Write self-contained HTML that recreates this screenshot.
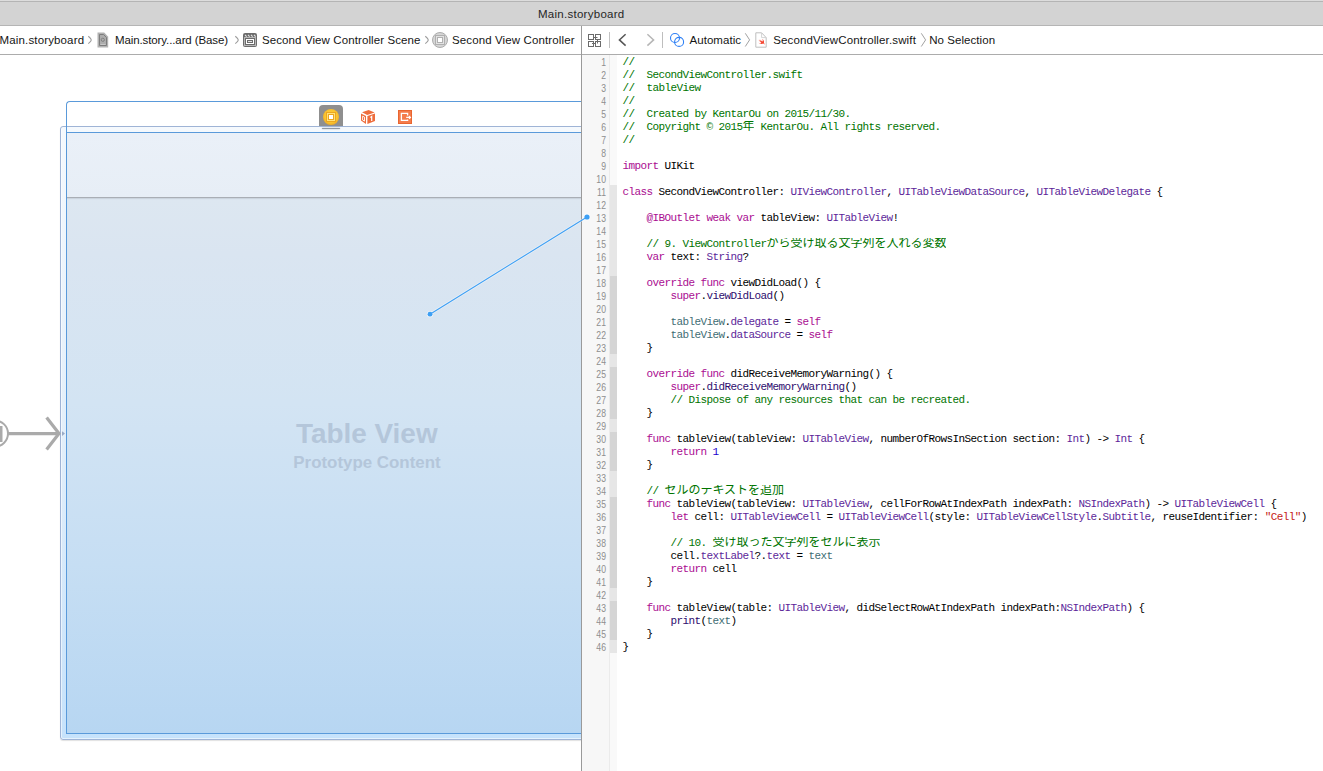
<!DOCTYPE html>
<html lang="en">
<head>
<meta charset="utf-8">
<title>Main.storyboard</title>
<style>
html,body{margin:0;padding:0}
body{width:1323px;height:771px;overflow:hidden;position:relative;background:#fff;font-family:"Liberation Sans",sans-serif;color:#000}
div,span,svg{position:absolute}
/* ---------- title bar ---------- */
#titlebar{left:0;top:0;width:1323px;height:26px;background:#d3d3d3;border-top:1px solid #dcdcdc;box-sizing:border-box;border-bottom:1px solid #b5b5b5}
#titlebar:before{content:"";position:absolute;left:0;top:0;width:100%;height:1px;background:#b4b4b4}
#title{left:538px;top:6px;width:88px;height:14px;line-height:14px;font-size:11.5px;color:#262626;white-space:nowrap;letter-spacing:.27px}
/* ---------- jump bars ---------- */
#jump{left:0;top:26px;width:1323px;height:28px;background:#fff;border-bottom:1px solid #acacac}
.bc{top:7px;height:14px;line-height:14px;font-size:11.5px;color:#151515;white-space:nowrap}
#vdiv{left:581px;top:26px;width:1px;height:745px;background:#9a9a9a}
/* ---------- storyboard canvas ---------- */
#canvas{left:0;top:55px;width:581px;height:716px;background:#fff;overflow:hidden}

/* storyboard objects */
#frame{left:60px;top:71px;width:600px;height:614px;box-sizing:border-box;border:1px solid #9fb4d6;border-radius:3px;background:linear-gradient(#f5f9fd 0%,#e3effa 50%,#c6e2fb 100%);box-shadow:0 1px 1px rgba(0,0,0,.12),inset 1px 0 0 rgba(255,255,255,.55),inset 0 -1px 0 rgba(255,255,255,.55)}
#dock{left:66px;top:46px;width:600px;height:25px;box-sizing:border-box;border-left:1px solid #5a9ada;border-top:1px solid #5a9ada;border-radius:4px 0 0 0;background:#fff}
#dockl{left:66px;top:71px;width:1px;height:7px;background:#5a9ada}
#view{left:66px;top:77px;width:600px;height:602px;box-sizing:border-box;border:1px solid #5a9ada;background:linear-gradient(#e0e8f1 0%,#dde7f1 11%,#dae5f1 20%,#d3e4f3 45%,#c6def3 72%,#b7d6f2 100%)}
#nav{left:0;top:0;width:598px;height:64px;background:linear-gradient(#eaf0f8,#e7eef6);border-bottom:1px solid #a9aeb5;box-shadow:0 1px 1px rgba(0,0,0,.08)}
#tv1{left:229px;top:285px;width:141px;height:32px;line-height:32px;font-size:27.9px;font-weight:bold;color:#b4c6da;white-space:nowrap;text-align:center}
#tv2{left:226px;top:320px;width:148px;height:20px;line-height:20px;font-size:16.9px;font-weight:bold;color:#b4c6da;white-space:nowrap;text-align:center}
#sel{left:319px;top:50px;width:24px;height:21px;background:#8f8f8f;border-radius:4px 4px 0 0}
#selsh{left:322px;top:73px;width:18px;height:1px;background:#9096a0;box-shadow:0 0 1.5px #9096a0;border-radius:1px}
/* ---------- editor ---------- */
#gutter{left:582px;top:55px;width:28px;height:716px;background:#f7f7f7;border-right:1px solid #ebebeb;box-sizing:border-box}
#ribbon{left:610px;top:55px;width:7px;height:716px;background:#f9f9f9}
#ribbon .r1{left:0;width:7px;background:#e6e6e6}
#ribbon .r2{left:0;width:7px;background:#d5d5d5}
#nums{left:581.5px;top:55px;width:24px}
#nums div{position:static;height:13px;line-height:15px;text-align:right;font-size:10.3px;color:#8e8e8e;transform:scaleX(.84);transform-origin:100% 50%}
#code{left:622.4px;top:56px;width:700px;font-family:"Liberation Mono",monospace;font-size:11px;letter-spacing:-.6px}
#code .l{position:static;height:13px;line-height:13px;white-space:pre}
#code span{position:static}
.k{color:#aa0d91}.c{color:#007400}.s{color:#c41a16}.n{color:#1c00cf}.t{color:#3f6e74}.p{color:#5c2699}.f{color:#2e0d6e}
#code .j{display:inline-block;position:relative;height:13px;vertical-align:top;overflow:hidden;letter-spacing:0}
#code .j i{position:absolute;left:0;top:0;font-style:normal;color:#007400;white-space:nowrap;overflow:hidden;width:100%;height:13px;line-height:13px;font-size:12px;letter-spacing:0;font-family:"Liberation Mono","Noto Sans CJK JP",monospace}
</style>
</head>
<body>
<div id="titlebar"><div id="title">Main.storyboard</div></div>

<div id="jump">
  <svg style="left:0;top:0" width="1323" height="28" viewBox="0 26 1323 28">
    <!-- small chevrons -->
    <g fill="none" stroke="#9c9c9c" stroke-width="1.1">
      <path d="M88.3 36.2 Q91.3 38.6 91.3 39.9 Q91.3 41.2 88.3 43.6"/>
      <path d="M235.3 36.2 Q238.3 38.6 238.3 39.9 Q238.3 41.2 235.3 43.6"/>
      <path d="M425.3 36.2 Q428.3 38.6 428.3 39.9 Q428.3 41.2 425.3 43.6"/>
    </g>
    <!-- storyboard file icon -->
    <path d="M97.5 32.5 H104.2 L108.2 36.8 V47.5 H97.5 Z" fill="#b2b2b2"/>
    <path d="M99.5 34.5 H103.6 L106.5 37.6 V45.5 H99.5 Z" fill="#adadad" stroke="#7c7c7c" stroke-width="1"/>
    <circle cx="102.8" cy="39.8" r="1.6" fill="none" stroke="#7c7c7c" stroke-width=".9"/>
    <path d="M100.5 44.5 H105.5" stroke="#c8c8c8" stroke-width="1"/>
    <!-- scene icon -->
    <rect x="243.5" y="33.5" width="13" height="13" rx="1" fill="#b6b6b6" stroke="#6c6c6c"/>
    <rect x="244" y="34" width="12" height="3" fill="#6c6c6c"/>
    <path d="M245 34.8 l1.6 1.8 M248 34.8 l1.6 1.8 M251 34.8 l1.6 1.8 M254 34.8 l1.6 1.8" stroke="#e6e6e6" stroke-width="1.1"/>
    <rect x="245.5" y="38.5" width="9" height="6" fill="#fff" stroke="#6c6c6c"/>
    <rect x="247.5" y="40.5" width="5" height="2" fill="#e0e0e0" stroke="#6c6c6c"/>
    <!-- view controller icon (gray) -->
    <circle cx="440" cy="40" r="7.5" fill="#d6d6d6" stroke="#adadad"/>
    <rect x="435.5" y="35.5" width="9" height="9" fill="none" stroke="#b0b0b0"/>
    <rect x="436.5" y="36.5" width="7" height="7" fill="none" stroke="#e2e2e2"/>
    <rect x="437.5" y="37.5" width="5" height="5" fill="#fff" stroke="#b0b0b0"/>
    <!-- related items grid -->
    <g fill="none" stroke="#6b6b6b" stroke-width="1">
      <rect x="588.5" y="34.5" width="5" height="5"/>
      <rect x="595.5" y="34.5" width="5" height="5"/>
      <rect x="588.5" y="41.5" width="5" height="5"/>
      <rect x="595.5" y="41.5" width="5" height="5"/>
      <path d="M594 37.5 H597.5 M597.5 40 V43.5 M592 43.5 H595.5"/>
    </g>
    <path d="M609.5 32 V48" stroke="#c2c2c2"/>
    <path d="M625.6 34.2 L619.4 39.9 L625.6 45.6" fill="none" stroke="#565656" stroke-width="1.5"/>
    <path d="M647.4 34.2 L653.6 39.9 L647.4 45.6" fill="none" stroke="#b6b6b6" stroke-width="1.5"/>
    <path d="M662.5 32 V48" stroke="#bebebe"/>
    <g fill="none" stroke="#2f80f5" stroke-width="1.1">
      <circle cx="675" cy="38" r="4.5"/><circle cx="679.1" cy="41.9" r="4.5"/>
    </g>
    <!-- big chevrons -->
    <g fill="none" stroke="#a2a2a2" stroke-width="1">
      <path d="M745.3 33.3 L749.6 39.9 L745.3 46.5"/>
      <path d="M921.3 33.3 L925.6 39.9 L921.3 46.5"/>
    </g>
    <!-- swift file -->
    <path d="M755.8 32.8 H761.6 L766.2 37.6 V47.2 H755.8 Z" fill="#fff" stroke="#bfbfbf"/>
    <path d="M761.6 33 V37.6 H766" fill="none" stroke="#cfcfcf" stroke-width=".9"/>
    <path d="M757.9 42.6 C759.6 44 762 44.3 763.2 43.6 C763.9 43.9 764.4 44.4 764.7 44.9 C764.7 43.9 764.3 43.2 763.9 42.7 C764.3 41.1 763.5 39.6 762.3 38.9 C762.9 40 762.9 40.9 762.6 41.6 C761.6 40.9 760.4 40 759.5 39.2 C760.1 40.2 760.9 41.1 761.6 41.9 C760.5 41.3 759.4 40.5 758.5 39.8 C759.3 41 760.4 42.1 761.5 43 C760.3 43.3 759 43.2 757.9 42.6 Z" fill="#f4412c"/>
  </svg>

  <div class="bc" style="left:-.4px;letter-spacing:.14px">Main.storyboard</div>
  <div class="bc" style="left:115px;letter-spacing:-.11px">Main.story...ard (Base)</div>
  <div class="bc" style="left:262px;letter-spacing:.1px">Second View Controller Scene</div>
  <div class="bc" style="left:452px;letter-spacing:.12px">Second View Controller</div>
  <div class="bc" style="left:689.5px;letter-spacing:.05px">Automatic</div>
  <div class="bc" style="left:773.2px;letter-spacing:.14px">SecondViewController.swift</div>
  <div class="bc" style="left:929.2px;letter-spacing:.06px">No Selection</div>
</div>

<div id="canvas">
  <div id="frame"></div>
  <div id="dock"></div>
  <div id="dockl"></div>
  <div id="sel"></div>
  <div id="selsh"></div>
  <div id="view">
    <div id="nav"></div>
    <div id="tv1">Table View</div>
    <div id="tv2">Prototype Content</div>
  </div>
  <!-- dock icons + entry arrow; coordinates are page px, svg offset by canvas top (55) -->
  <svg id="cv" style="left:0;top:0" width="581" height="716" viewBox="0 55 581 716">
    <defs>
      <radialGradient id="yg" cx="50%" cy="45%" r="55%"><stop offset="0" stop-color="#ffd23c"/><stop offset=".7" stop-color="#fac530"/><stop offset="1" stop-color="#f0ac22"/></radialGradient>
    </defs>
    <!-- view controller (yellow) -->
    <circle cx="331" cy="117" r="8" fill="url(#yg)"/>
    <rect x="326.5" y="112.5" width="9" height="9" fill="none" stroke="#eda71f" stroke-width="1"/>
    <rect x="327.5" y="113.5" width="7" height="7" fill="none" stroke="#ffe27a" stroke-width="1"/>
    <rect x="328.5" y="114.5" width="5" height="5" fill="#fff" stroke="#eda71f" stroke-width="1"/>
    <!-- first responder cube -->
    <g fill="#ee6d3c">
      <path d="M362 112.3 L368.6 110 L374.6 112.4 L367.2 114.9 Z"/>
      <path d="M361 113.4 L366 115.9 L366 124 L361 120.6 Z"/>
      <path d="M367.4 116 L375 113.5 L375 121 L367.4 124 Z"/>
    </g>
    <path d="M362.6 116.2 l1.9 .9 v4 l-1.9 -1.1 Z" fill="none" stroke="#fff" stroke-width=".9"/>
    <path d="M370.4 117.4 l1.3 -.9 v4.4" fill="none" stroke="#fff" stroke-width="1.2"/>
    <!-- exit -->
    <rect x="398.5" y="110.5" width="13" height="13" fill="#f47c4c" stroke="#e9652f"/>
    <path d="M407.6 115.4 V113.4 H401.4 V120.4 H407.6 V119.4" fill="none" stroke="#fff" stroke-width="1.3"/>
    <path d="M406.2 117.4 H410.5 M409 116 L410.5 117.4 L409 118.8" fill="none" stroke="#fff" stroke-width="1.1"/>
    <!-- entry point arrow -->
    <g stroke="#aaa" fill="none">
      <circle cx="-5" cy="433.6" r="13" stroke-width="2"/>
      <path d="M1 426 V442" stroke-width="3"/>
      <path d="M8 433.6 H59" stroke-width="3.2"/>
      <path d="M46.6 417.6 L59 433.6 L46.6 449.6" stroke-width="3.2"/>
    </g>
    <path d="M62 431.2 L65 433.6 L62 436 Z" fill="#98aac6"/>
  </svg>
</div>

<div id="gutter"></div>
<div id="ribbon"><div class="r1" style="top:130px;height:468px"></div><div class="r2" style="top:221px;height:78px"></div><div class="r2" style="top:312px;height:52px"></div><div class="r2" style="top:377px;height:39px"></div><div class="r2" style="top:442px;height:91px"></div><div class="r2" style="top:546px;height:39px"></div></div>
<div id="nums">
<div>1</div>
<div>2</div>
<div>3</div>
<div>4</div>
<div>5</div>
<div>6</div>
<div>7</div>
<div>8</div>
<div>9</div>
<div>10</div>
<div>11</div>
<div>12</div>
<div>13</div>
<div>14</div>
<div>15</div>
<div>16</div>
<div>17</div>
<div>18</div>
<div>19</div>
<div>20</div>
<div>21</div>
<div>22</div>
<div>23</div>
<div>24</div>
<div>25</div>
<div>26</div>
<div>27</div>
<div>28</div>
<div>29</div>
<div>30</div>
<div>31</div>
<div>32</div>
<div>33</div>
<div>34</div>
<div>35</div>
<div>36</div>
<div>37</div>
<div>38</div>
<div>39</div>
<div>40</div>
<div>41</div>
<div>42</div>
<div>43</div>
<div>44</div>
<div>45</div>
<div>46</div>
</div>
<div id="code">
<div class="l"><span class="c">//</span></div>
<div class="l"><span class="c">//  SecondViewController.swift</span></div>
<div class="l"><span class="c">//  tableView</span></div>
<div class="l"><span class="c">//</span></div>
<div class="l"><span class="c">//  Created by KentarOu on 2015/11/30.</span></div>
<div class="l"><span class="c">//  Copyright © 2015<span class="j" style="width:12px"><i>年</i></span> KentarOu. All rights reserved.</span></div>
<div class="l"><span class="c">//</span></div>
<div class="l"></div>
<div class="l"><span class="k">import</span> UIKit</div>
<div class="l"></div>
<div class="l"><span class="k">class</span> SecondViewController: <span class="p">UIViewController</span>, <span class="p">UITableViewDataSource</span>, <span class="p">UITableViewDelegate</span> {</div>
<div class="l"></div>
<div class="l">    <span class="k">@IBOutlet</span> <span class="k">weak</span> <span class="k">var</span> tableView: <span class="p">UITableView</span>!</div>
<div class="l"></div>
<div class="l">    <span class="c">// 9. ViewController<span class="j" style="width:180px"><i>から受け取る文字列を入れる変数</i></span></span></div>
<div class="l">    <span class="k">var</span> text: <span class="p">String</span>?</div>
<div class="l"></div>
<div class="l">    <span class="k">override</span> <span class="k">func</span> viewDidLoad() {</div>
<div class="l">        <span class="k">super</span>.<span class="f">viewDidLoad</span>()</div>
<div class="l"></div>
<div class="l">        <span class="t">tableView</span>.<span class="p">delegate</span> = <span class="k">self</span></div>
<div class="l">        <span class="t">tableView</span>.<span class="p">dataSource</span> = <span class="k">self</span></div>
<div class="l">    }</div>
<div class="l"></div>
<div class="l">    <span class="k">override</span> <span class="k">func</span> didReceiveMemoryWarning() {</div>
<div class="l">        <span class="k">super</span>.<span class="f">didReceiveMemoryWarning</span>()</div>
<div class="l">        <span class="c">// Dispose of any resources that can be recreated.</span></div>
<div class="l">    }</div>
<div class="l"></div>
<div class="l">    <span class="k">func</span> tableView(tableView: <span class="p">UITableView</span>, numberOfRowsInSection section: <span class="p">Int</span>) -&gt; <span class="p">Int</span> {</div>
<div class="l">        <span class="k">return</span> <span class="n">1</span></div>
<div class="l">    }</div>
<div class="l"></div>
<div class="l">    <span class="c">// <span class="j" style="width:120px"><i>セルのテキストを追加</i></span></span></div>
<div class="l">    <span class="k">func</span> tableView(tableView: <span class="p">UITableView</span>, cellForRowAtIndexPath indexPath: <span class="p">NSIndexPath</span>) -&gt; <span class="p">UITableViewCell</span> {</div>
<div class="l">        <span class="k">let</span> cell: <span class="p">UITableViewCell</span> = <span class="p">UITableViewCell</span>(style: <span class="p">UITableViewCellStyle</span>.<span class="p">Subtitle</span>, reuseIdentifier: <span class="s">"Cell"</span>)</div>
<div class="l"></div>
<div class="l">        <span class="c">// 10. <span class="j" style="width:168px"><i>受け取った文字列をセルに表示</i></span></span></div>
<div class="l">        cell.<span class="p">textLabel</span>?.<span class="p">text</span> = <span class="t">text</span></div>
<div class="l">        <span class="k">return</span> cell</div>
<div class="l">    }</div>
<div class="l"></div>
<div class="l">    <span class="k">func</span> tableView(table: <span class="p">UITableView</span>, didSelectRowAtIndexPath indexPath:<span class="p">NSIndexPath</span>) {</div>
<div class="l">        <span class="f">print</span>(<span class="t">text</span>)</div>
<div class="l">    }</div>
<div class="l">}</div>
</div>
<div id="vdiv"></div>
<svg id="conn" style="left:0;top:0" width="1323" height="771" viewBox="0 0 1323 771">
  <path d="M430 314.2 L587 217" stroke="#fff" stroke-opacity=".45" stroke-width="2.6" fill="none"/>
  <circle cx="430" cy="314.2" r="3.2" fill="#fff" fill-opacity=".45"/>
  <circle cx="587" cy="217" r="3.4" fill="#fff" fill-opacity=".6"/>
  <path d="M430 314.2 L587 217" stroke="#3d9ff4" stroke-width="1.1" fill="none"/>
  <circle cx="430" cy="314.2" r="2.4" fill="#3d9ff4"/>
  <circle cx="587" cy="217" r="2.6" fill="#3d9ff4"/>
</svg>
</body>
</html>
